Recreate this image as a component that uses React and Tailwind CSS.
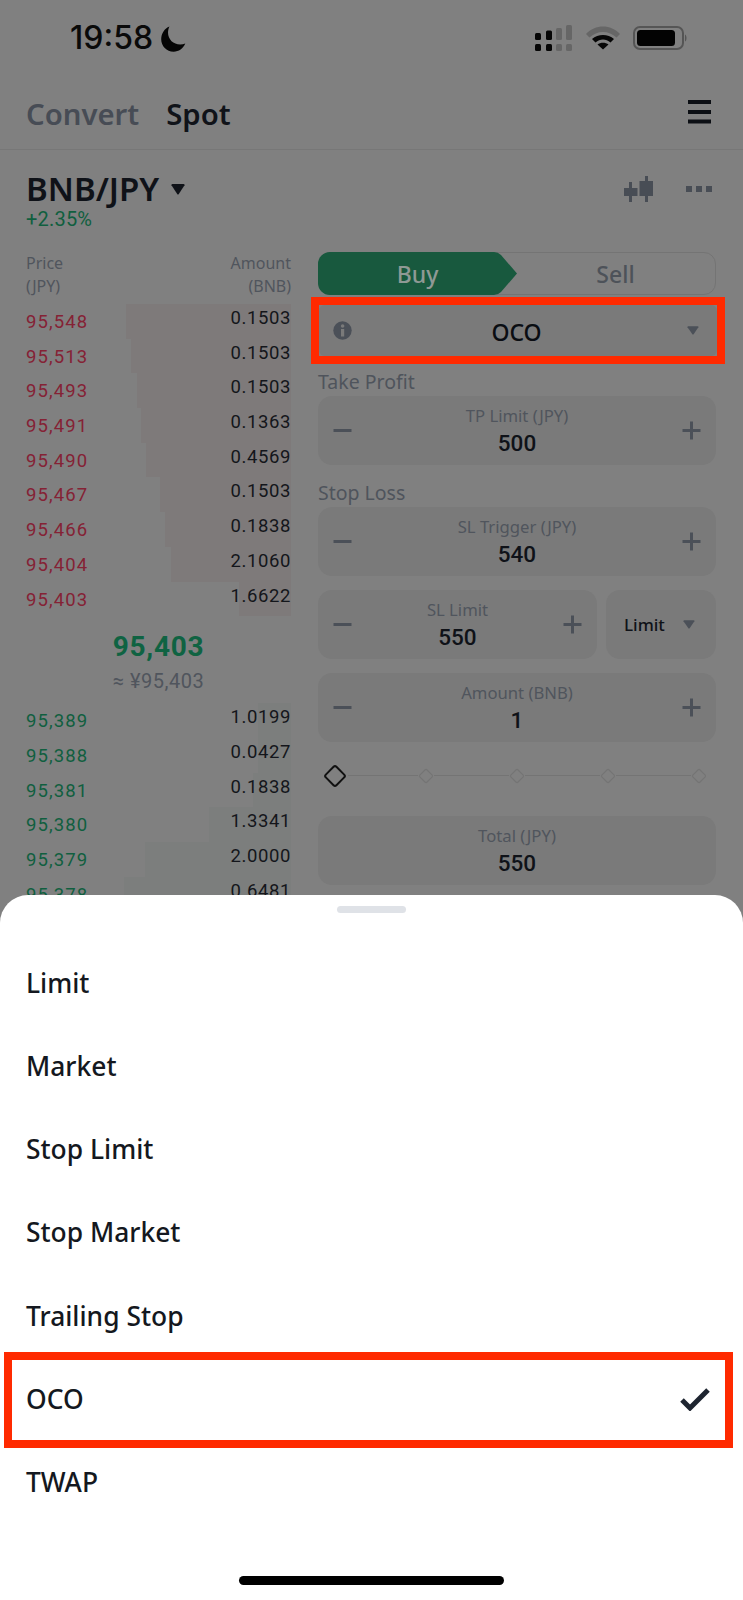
const plex = "font-['Noto_Sans','Liberation_Sans',sans-serif]";
const din = "font-['Roboto','Liberation_Sans',sans-serif]";

const asks = [
  ["95,548", "0.1503", 165],
  ["95,513", "0.1503", 160],
  ["95,493", "0.1503", 154],
  ["95,491", "0.1363", 150],
  ["95,490", "0.4569", 145],
  ["95,467", "0.1503", 131],
  ["95,466", "0.1838", 126],
  ["95,404", "2.1060", 120],
  ["95,403", "1.6622", 52],
];
const bids = [
  ["95,389", "1.0199", 33],
  ["95,388", "0.0427", 33],
  ["95,381", "0.1838", 38],
  ["95,380", "1.3341", 82],
  ["95,379", "2.0000", 146],
  ["95,378", "0.6481", 167],
];
const sheetItems = ["Limit", "Market", "Stop Limit", "Stop Market", "Trailing Stop", "OCO", "TWAP"];

function BookRow({ price, amount, bar, ask }) {
  return (
    <div className={`relative flex h-[34.7px] justify-between ${din} text-[18.5px]`}>
      <div className={`absolute inset-y-0 right-0 ${ask ? "bg-[#7e7a7a]" : "bg-[#7c7e7d]"}`} style={{ width: bar }} />
      <span className={`relative leading-[37px] tracking-[1.1px] ${ask ? "text-[#852235]" : "text-[#105f3f]"}`}>{price}</span>
      <span className="relative leading-[29px] tracking-[0.6px] text-[#14161b]">{amount}</span>
    </div>
  );
}

function Minus() {
  return <svg width="19" height="19" viewBox="0 0 19 19"><rect x="0.5" y="8" width="18" height="3" fill="#4b5058" /></svg>;
}
function Plus() {
  return <svg width="19" height="19" viewBox="0 0 19 19"><path d="M0.5 8h7.5v-7.5h3v7.5h7.5v3h-7.5v7.5h-3v-7.5h-7.5z" fill="#4b5058" /></svg>;
}
function Caret({ w = 12 }) {
  return <svg width={w} height="9" viewBox="0 0 12 9"><path d="M0.5 1.2Q0.2 0.2 1.3 0.2H10.7Q11.8 0.2 11.4 1.2L6.8 8Q6 9 5.2 8Z" fill="#4b5058" /></svg>;
}

function Stepper({ label, value, className = "" }) {
  return (
    <div className={`flex h-[69px] items-center justify-between rounded-[14px] bg-[#7a7a7a] px-[15px] ${className}`}>
      <Minus />
      <Field label={label} value={value} />
      <Plus />
    </div>
  );
}
function Field({ label, value }) {
  return (
    <div className="mt-[5px] flex flex-col items-center">
      <span className={`${plex} mt-[-2px] text-[16.7px] leading-[20px] text-[#50555d]`}>{label}</span>
      <span className={`${din} mt-[2px] text-[22.5px] font-medium leading-[30px] text-[#0f1218]`}>{value}</span>
    </div>
  );
}

function Diamond({ big }) {
  return big ? (
    <svg width="26" height="26" viewBox="0 0 26 26" className="shrink-0"><rect x="5.5" y="5.5" width="15" height="15" rx="2" transform="rotate(45 13 13)" fill="#808080" stroke="#111" strokeWidth="2" /></svg>
  ) : (
    <svg width="16" height="16" viewBox="0 0 16 16" className="shrink-0"><rect x="3" y="3" width="10" height="10" rx="1.5" transform="rotate(45 8 8)" fill="#808080" stroke="#747474" strokeWidth="1.2" /></svg>
  );
}

function StatusBar() {
  return (
    <div className="flex h-[75px] items-start justify-between pl-[70px] pr-[56px] pt-[24px]">
      <div className="flex items-center">
        <span className="font-['Inter',sans-serif] text-[32px] font-medium leading-[28px] text-[#0a0a0a]">19:58</span>
        <svg width="25" height="26" viewBox="0 0 25 26" className="ml-[8px] mt-[2px]"><path d="M8.5 0.5C7.5 2.2 7 4.5 7 6.6c0 7 5.4 12 12.2 12 1.8 0 3.5-0.4 5.1-1.1C22.3 22.4 17.7 25.7 12.6 25.7 5.6 25.7 0.2 20.2 0.2 13.3 0.2 7.5 3.6 2.3 8.5 0.5Z" fill="#050505" /></svg>
      </div>
      <svg width="152" height="26" viewBox="0 0 152 26" className="mt-px">
        <g fill="#060606">
          <rect x="0" y="8" width="6" height="7" rx="1.5" /><rect x="0" y="19" width="6" height="7" rx="1.5" />
          <rect x="11" y="5.5" width="6" height="9.5" rx="1.5" /><rect x="11" y="19" width="6" height="7" rx="1.5" />
        </g>
        <g fill="#666">
          <rect x="21" y="3" width="6" height="12" rx="1.5" /><rect x="21" y="19" width="6" height="7" rx="1.5" />
          <rect x="31" y="0" width="6" height="15" rx="1.5" /><rect x="31" y="19" width="6" height="7" rx="1.5" />
        </g>
        <path d="M51 9C60 -1 76 -1 85 9L81.5 12.5C74 5 62 5 54.5 12.5Z" fill="#666" />
        <path d="M57 14C63 8.5 73 8.5 79 14L75.5 17.5C71 13.5 65 13.5 60.5 17.5ZM62.5 19.5C65.5 17 70.5 17 73.5 19.5L68 24.5Z" fill="#060606" />
        <rect x="99" y="2" width="49" height="22" rx="6" fill="none" stroke="#555" strokeWidth="2" />
        <rect x="102" y="5" width="38" height="16" rx="3.5" fill="#030303" />
        <path d="M150 9.5C152 10.5 152 15.5 150 16.5Z" fill="#555" />
      </svg>
    </div>
  );
}

function Header() {
  return (
    <div className={`flex h-[75px] items-center justify-between border-b border-[#777777] pl-[26px] pr-[32px] ${plex} font-semibold`}>
      <div className="mt-[3px] flex items-center gap-[27px] text-[29.3px] leading-[36px]">
        <span className="text-[#474c55]">Convert</span>
        <span className="text-[#101319]">Spot</span>
      </div>
      <svg width="23" height="24" viewBox="0 0 23 24"><path d="M0 0h23v4H0zM0 10h23v4H0zM0 19.5h23v4H0z" fill="#0c0f14" /></svg>
    </div>
  );
}

function PairRow() {
  return (
    <div className="flex h-[102px] justify-between pl-[26px] pr-[31px] pt-[20px]">
      <div className={plex}>
        <div className="flex items-center text-[#0f1218]">
          <span className="text-[33px] font-semibold leading-[38px]">BNB/JPY</span>
          <svg width="14" height="11" viewBox="0 0 14 11" className="ml-[12px]"><path d="M0.5 1.2Q0.2 0 1.5 0H12.5Q13.8 0 13.5 1.2L7.8 10Q7 11 6.2 10Z" fill="#0f1218" /></svg>
        </div>
        <div className={`${din} text-[20px] leading-[23px] tracking-[0.2px] text-[#105f3f]`}>+2.35%</div>
      </div>
      <div className="flex items-start gap-[33px] pt-[6px]">
        <svg width="29" height="26" viewBox="0 0 29 26" fill="#484d55"><path d="M5 6h3v6h5.5v8H8v6H5v-6H0v-8h5zM21 0h3v5h5v15h-5v6h-3v-6h-5.500V5H21z" /></svg>
        <svg width="26" height="6" viewBox="0 0 26 6" fill="#484d55" className="mt-[10px]"><path d="M0 0h6v6H0zM10 0h6v6h-6zM20 0h6v6h-6z" /></svg>
      </div>
    </div>
  );
}

function OrderBook() {
  return (
    <div className="w-[265px] shrink-0">
      <div className={`flex h-[52px] justify-between ${plex} text-[16px] leading-[23px] text-[#50555d]`}>
        <div>Price<br />(JPY)</div>
        <div className="text-right">Amount<br />(BNB)</div>
      </div>
      {asks.map(([p, a, b]) => <BookRow key={p + a} price={p} amount={a} bar={b} ask />)}
      <div className={`flex h-[87px] flex-col items-center ${din}`}>
        <span className="mt-[13px] text-[28px] font-bold leading-[36px] tracking-[0.7px] text-[#0f6342]">95,403</span>
        <span className="mt-[4px] text-[20px] leading-[24px] tracking-[0.5px] text-[#50555d]">≈ ¥95,403</span>
      </div>
      {bids.map(([p, a, b]) => <BookRow key={p + a} price={p} amount={a} bar={b} />)}
    </div>
  );
}

function OrderForm() {
  return (
    <div className="flex w-[398px] shrink-0 flex-col">
      <div className={`flex h-[43px] rounded-[12px] border border-[#747474] ${plex} text-[23px] font-medium`}>
        <div className="relative -m-px flex h-[43px] w-[199px] items-center justify-center">
          <svg width="199" height="43" viewBox="0 0 199 43" className="absolute inset-0"><path d="M12 0H176Q180 0 183 3L199 21.500L183 40Q180 43 176 43H12A12 12 0 0 1 0 31V12A12 12 0 0 1 12 0Z" fill="#18593e" /></svg>
          <span className="relative mt-[2px] text-[#8f9995]">Buy</span>
        </div>
        <div className="mt-[2px] flex flex-1 items-center justify-center text-[#4d5259]">Sell</div>
      </div>
      <div className="ml-[-7px] mr-[-9px] mt-[2px] h-[67px] border-[8px] border-[#ff2a00] bg-[#808080]">
        <div className="flex h-full items-center justify-between rounded-[6px] bg-[#7a7a7a] pl-[14px] pr-[18px]">
          <svg width="19" height="19" viewBox="0 0 19 19"><circle cx="9.500" cy="9.500" r="9.200" fill="#4b5058" /><rect x="8" y="8" width="3.200" height="7.500" fill="#7a7a7a" /><circle cx="9.600" cy="5" r="1.800" fill="#7a7a7a" /></svg>
          <span className={`${plex} mr-[6px] mt-[3px] text-[23px] font-medium leading-[30px] text-[#0a0d12]`}>OCO</span>
          <Caret />
        </div>
      </div>
      <div className={`h-[32px] ${plex} text-[19.5px] leading-[36px] text-[#4f545c]`}>Take Profit</div>
      <Stepper label="TP Limit (JPY)" value="500" />
      <div className={`flex h-[42px] items-end ${plex} text-[19.5px] leading-[28px] text-[#4f545c]`}>Stop Loss</div>
      <Stepper label="SL Trigger (JPY)" value="540" />
      <div className="mt-[14px] flex gap-[9px]">
        <Stepper label="SL Limit" value="550" className="flex-1" />
        <div className="flex h-[69px] w-[110px] items-center justify-between rounded-[14px] bg-[#7a7a7a] pl-[18px] pr-[21px]">
          <span className={`${plex} text-[17px] font-medium text-[#0f1218]`}>Limit</span>
          <Caret />
        </div>
      </div>
      <Stepper label="Amount (BNB)" value="1" className="mt-[14px]" />
      <div className="flex h-[67px] items-center pl-[4px]">
        <Diamond big />
        <div className="h-px w-[70px] bg-[#747474]" />
        <Diamond />
        <div className="h-px w-[74.5px] bg-[#747474]" />
        <Diamond />
        <div className="h-px w-[75.5px] bg-[#747474]" />
        <Diamond />
        <div className="h-px w-[75px] bg-[#747474]" />
        <Diamond />
      </div>
      <div className="mt-[7px] flex h-[69px] items-center justify-center rounded-[14px] bg-[#7a7a7a]">
        <Field label="Total (JPY)" value="550" />
      </div>
    </div>
  );
}

function Sheet() {
  return (
    <div className="flex h-[705px] flex-col rounded-t-[28px] bg-white">
      <div className="mx-auto mt-[11px] h-[7px] w-[69px] rounded-full bg-[#dfe2e7]" />
      <div className="mt-[29px]">
        {sheetItems.map((item) => (
          <div key={item} className={`relative flex h-[83.2px] items-center justify-between pl-[26px] pr-[33px] ${plex} text-[26.4px] font-medium text-[#141820]`}>
            <span>{item}</span>
            {item === "OCO" && (
              <>
                <svg width="30" height="23" viewBox="0 0 30 23"><path d="M2 12L10 20L28 2" fill="none" stroke="#1e2530" strokeWidth="5" /></svg>
                <div className="absolute left-[4px] right-[10px] top-[-6px] bottom-[-7px] border-[8px] border-[#ff2a00]" />
              </>
            )}
          </div>
        ))}
      </div>
      <div className="mx-auto mt-[52px] h-[9px] w-[265px] rounded-full bg-black" />
    </div>
  );
}

export default function App() {
  return (
    <div className="flex h-[1600px] w-[743px] flex-col overflow-hidden bg-[#808080]">
      <div className="h-[895px] overflow-hidden">
        <StatusBar />
        <Header />
        <PairRow />
        <div className="flex gap-[27px] pl-[26px]">
          <OrderBook />
          <OrderForm />
        </div>
      </div>
      <Sheet />
    </div>
  );
}
